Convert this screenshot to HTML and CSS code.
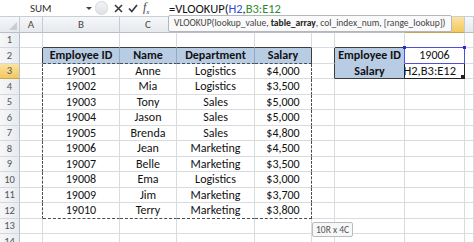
FILE: index.html
```html
<!DOCTYPE html>
<html lang="en">
<head>
    <meta charset="UTF-8">
    <title>VLOOKUP</title>
    <link rel="stylesheet" href="styles.css">
</head>
<body>
    <!-- Formula bar -->
    <div class="formula-bar">
        <div class="name-box"><span>SUM</span><i class="drop"></i></div>
        <div class="grip"></div>
        <div class="fx-buttons">
            <svg width="9" height="9" viewBox="0 0 9 9"><path d="M1 1L8 8M8 1L1 8" stroke="#3a3a3a" stroke-width="1.6" fill="none"/></svg>
            <svg width="10" height="9" viewBox="0 0 10 9"><path d="M1 4.5L3.8 7.5L9 1" stroke="#3a3a3a" stroke-width="1.7" fill="none"/></svg>
            <span class="fx">f<sub>x</sub></span>
        </div>
        <div class="formula">=VLOOKUP(<span class="ref-blue">H2</span>,<span class="ref-green">B3:E12</span></div>
    </div>

    <div class="sheet">
        <div class="tip-args">VLOOKUP(lookup_value, <b>table_array</b>, col_index_num, [range_lookup])</div>

        <!-- D to G headers sit under the tooltip -->
        <div class="row heads">
            <div class="corner"><i></i></div>
            <div>A</div><div>B</div><div>C</div><div></div><div></div><div></div><div></div><div class="hot"></div><div></div>
        </div>

        <div class="row">
            <div class="rh">1</div>
            <div></div><div class="bt"></div><div class="bt"></div><div class="bt"></div><div class="bt"></div><div></div><div class="bt"></div><div class="bt-blue"></div><div></div>
        </div>

        <div class="row">
            <div class="rh">2</div>
            <div class="br"></div>
            <div class="th">Employee ID</div><div class="th">Name</div><div class="th">Department</div><div class="th last">Salary</div>
            <div class="br"></div>
            <div class="lk top">Employee ID</div>
            <div class="pick">19006<i class="k1"></i><i class="k2"></i></div>
            <div></div>
        </div>

        <div class="row">
            <div class="rh hot">3</div>
            <div class="ants-l"></div>
            <div>19001</div><div>Anne</div><div>Logistics</div><div class="ants-r">$4,000</div>
            <div class="br"></div>
            <div class="lk bottom">Salary</div>
            <div class="edit"><span>H2,B3:E12</span><i class="handle"></i></div>
            <div></div>
        </div>

        <div class="row">
            <div class="rh">4</div>
            <div class="ants-l"></div>
            <div>19002</div><div>Mia</div><div>Logistics</div><div class="ants-r">$3,500</div>
            <div></div><div></div><div></div><div></div>
        </div>

        <div class="row">
            <div class="rh">5</div>
            <div class="ants-l"></div>
            <div>19003</div><div>Tony</div><div>Sales</div><div class="ants-r">$5,000</div>
            <div></div><div></div><div></div><div></div>
        </div>

        <div class="row">
            <div class="rh">6</div>
            <div class="ants-l"></div>
            <div>19004</div><div>Jason</div><div>Sales</div><div class="ants-r">$5,000</div>
            <div></div><div></div><div></div><div></div>
        </div>

        <div class="row">
            <div class="rh">7</div>
            <div class="ants-l"></div>
            <div>19005</div><div>Brenda</div><div>Sales</div><div class="ants-r">$4,800</div>
            <div></div><div></div><div></div><div></div>
        </div>

        <div class="row">
            <div class="rh">8</div>
            <div class="ants-l"></div>
            <div>19006</div><div>Jean</div><div>Marketing</div><div class="ants-r">$4,500</div>
            <div></div><div></div><div></div><div></div>
        </div>

        <div class="row">
            <div class="rh">9</div>
            <div class="ants-l"></div>
            <div>19007</div><div>Belle</div><div>Marketing</div><div class="ants-r">$3,500</div>
            <div></div><div></div><div></div><div></div>
        </div>

        <div class="row">
            <div class="rh">10</div>
            <div class="ants-l"></div>
            <div>19008</div><div>Ema</div><div>Logistics</div><div class="ants-r">$3,000</div>
            <div></div><div></div><div></div><div></div>
        </div>

        <div class="row">
            <div class="rh">11</div>
            <div class="ants-l"></div>
            <div>19009</div><div>Jim</div><div>Marketing</div><div class="ants-r">$3,700</div>
            <div></div><div></div><div></div><div></div>
        </div>

        <div class="row">
            <div class="rh">12</div>
            <div class="ants-l"></div>
            <div class="ants-b">19010</div><div class="ants-b">Terry</div><div class="ants-b">Marketing</div><div class="ants-b ants-r">$3,800</div>
            <div></div><div></div><div></div><div></div>
        </div>

        <div class="row">
            <div class="rh">13</div>
            <div></div><div></div><div></div><div></div><div></div>
            <div class="size-cell"><span class="tip-size">10R x 4C</span></div>
            <div></div><div></div><div></div>
        </div>

        <div class="row">
            <div class="rh">14</div>
            <div></div><div></div><div></div><div></div><div></div><div></div><div></div><div></div><div></div>
        </div>
    </div>
</body>
</html>
```

FILE: styles.css
```css
body {
    margin: 0;
    width: 474px;
    height: 242px;
    overflow: hidden;
    background: #fff;
    font-family: Carlito, Lato, "Liberation Sans", sans-serif;
    color: #111;
}

/* formula bar */
.formula-bar {
    display: flex;
    align-items: center;
    height: 17px;
    box-sizing: border-box;
    border-bottom: 1px solid #c9ced4;
}

.name-box {
    display: flex;
    align-items: center;
    width: 95px;
    font-size: 11px;
    color: #333;
}

.name-box span {
    margin-left: 30px;
}

.name-box .drop {
    margin-left: auto;
    margin-right: 3px;
    border-left: 3px solid transparent;
    border-right: 3px solid transparent;
    border-top: 3px solid #444;
}

.grip {
    width: 13px;
    height: 14px;
    border-radius: 7px;
    background: linear-gradient(#f3f4f6, #dfe2e6);
    border: 1px solid #d3d7dc;
    box-sizing: border-box;
}

.fx-buttons {
    display: flex;
    align-items: center;
    gap: 5px;
    margin-left: 6px;
    width: 50px;
}

.fx {
    font-family: "Liberation Serif", serif;
    font-style: italic;
    font-size: 12px;
    color: #444;
}

.fx sub {
    font-size: 7px;
}

.formula {
    margin-left: 5px;
    font-size: 12.5px;
    color: #111;
}

.ref-blue {
    color: #2f4fd8;
}

.ref-green {
    color: #2e8b2e;
}

/* sheet */
.sheet {
    position: relative;
}

.row {
    display: grid;
    grid-template-columns: 20px 23px 77px 57px 78px 57px 23px 70px 60px 1fr;
    height: 15.5px;
    font-size: 12px;
}

.row > div {
    box-sizing: border-box;
    border-right: 1px solid #d8dbe0;
    border-bottom: 1px solid #d8dbe0;
    display: flex;
    align-items: center;
    justify-content: center;
    white-space: nowrap;
}

.heads > div {
    background: linear-gradient(#f6f7f9, #e6e9ed);
    border-right-color: #c6ccd3;
    border-bottom-color: #b7bec7;
    color: #4a4a4a;
    font-size: 11px;
}

.heads > .hot,
.row > .rh.hot {
    background: linear-gradient(#fbe3a0, #f3c85f);
    border-bottom-color: #c9a44e;
}

.corner {
    position: relative;
}

.corner i {
    position: absolute;
    right: 2px;
    bottom: 2px;
    border-left: 8px solid transparent;
    border-bottom: 8px solid #c9ced5;
}

.row > .rh {
    background: linear-gradient(90deg, #f6f7f9, #e8ebef);
    border-right-color: #b7bec7;
    border-bottom-color: #d3d8de;
    color: #555;
    font-size: 10.5px;
}

/* data table */
.row > .bt {
    border-bottom-color: #3c3c3c;
}

.row > .br {
    border-right-color: #3c3c3c;
}

.row > .th {
    background: #b8cce4;
    font-weight: bold;
    border-right-color: #93aac6;
    border-bottom: 1px dashed #4c4c4c;
}

.row > .th.last {
    border-right-color: #3c3c3c;
}

.row > .ants-l {
    border-right: 1px dashed #4c4c4c;
}

.row > .ants-r {
    border-right: 1px dashed #4c4c4c;
}

.row > .ants-b {
    border-bottom: 1px dashed #4c4c4c;
}

/* lookup block */
.row > .lk {
    background: #b8cce4;
    font-weight: bold;
}

.row > .lk.top {
    border-bottom-color: #b8cce4;
    border-right-color: #5050d6;
}

.row > .lk.bottom {
    border-bottom-color: #3c3c3c;
    border-right-color: #222;
}

.row > .bt-blue {
    border-bottom-color: #5050d6;
}

.row > .pick {
    position: relative;
    border-right-color: #5050d6;
    border-bottom-color: #5050d6;
}

.pick i {
    position: absolute;
    width: 3px;
    height: 3px;
    background: #2a2ad0;
    top: -2px;
}

.pick .k1 {
    left: -2px;
}

.pick .k2 {
    right: -2px;
}

.row > .edit {
    position: relative;
    justify-content: flex-end;
    overflow: hidden;
    padding-right: 8px;
    font-size: 12.5px;
    border-right-color: #222;
    border-bottom-color: #222;
}

.edit span {
    flex-shrink: 0;
}

.edit .handle {
    position: absolute;
    right: -1px;
    bottom: -1px;
    width: 4px;
    height: 4px;
    background: #222;
}

/* tooltips */
.tip-args {
    position: absolute;
    left: 168px;
    top: -2px;
    width: 284px;
    height: 17px;
    box-sizing: border-box;
    padding-left: 5px;
    background: #fafafa;
    border: 1px solid #b4b8bd;
    border-radius: 2px;
    font-size: 9.5px;
    line-height: 15px;
    color: #444;
    white-space: nowrap;
    overflow: hidden;
    z-index: 2;
}

.tip-args b {
    color: #222;
}

.row > .size-cell {
    position: relative;
    overflow: visible;
}

.tip-size {
    position: absolute;
    left: 0;
    top: 3px;
    padding: 0 3px;
    height: 15px;
    line-height: 14px;
    box-sizing: border-box;
    background: #f7f7f7;
    border: 1px solid #b9bdc2;
    border-radius: 2px;
    font-size: 9.5px;
    color: #555;
    z-index: 2;
}
```
